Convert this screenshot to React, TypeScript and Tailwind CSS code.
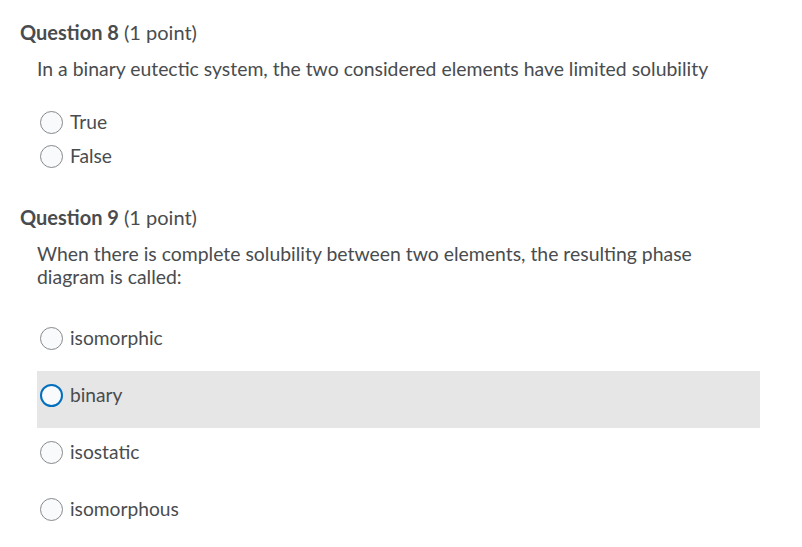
import React from "react";

const Radio = ({ focused = false }: { focused?: boolean }) => (
  <span
    className={
      focused
        ? "inline-block w-[23px] h-[23px] rounded-full border-2 border-[#006fbf] bg-[#f9fafb] shrink-0"
        : "inline-block w-[23px] h-[23px] rounded-full border border-[#868a8e] bg-[#f9fafb] shrink-0"
    }
  />
);

const q9Options = ["isomorphic", "binary", "isostatic", "isomorphous"];

export default function App() {
  return (
    <div className="w-[802px] h-[547px] bg-white text-[#494c4e] font-['Lato','Noto_Sans',sans-serif] pl-[20px] pt-[20px]">
      {/* Question 8 */}
      <h2 className="text-[20px] leading-[24px]">
        <span className="font-bold">Question 8</span> (1 point)
      </h2>
      <p className="mt-[13px] ml-[17px] text-[19.4px] leading-[24px]">
        In a binary eutectic system, the two considered elements have limited solubility
      </p>
      <div className="mt-[30px] ml-[20px] flex flex-col gap-[11px]">
        {["True", "False"].map((o) => (
          <label key={o} className="flex items-center gap-[7px] h-[23px] text-[19.2px]">
            <Radio />
            {o}
          </label>
        ))}
      </div>

      {/* Question 9 */}
      <h2 className="mt-[37px] text-[20px] leading-[24px]">
        <span className="font-bold">Question 9</span> (1 point)
      </h2>
      <p className="mt-[13px] ml-[17px] w-[670px] text-[19.4px] leading-[23px]">
        When there is complete solubility between two elements, the resulting phase diagram is called:
      </p>
      <div className="mt-[26px] ml-[17px] w-[723px] flex flex-col">
        {q9Options.map((o) => (
          <label
            key={o}
            className={
              "flex items-start h-[57px] pt-[13px] pl-[3px] text-[19.2px] " +
              (o === "binary" ? "bg-[#e6e6e6]" : "")
            }
          >
            <span className="flex items-center gap-[7px] h-[23px]">
              <Radio focused={o === "binary"} />
              {o}
            </span>
          </label>
        ))}
      </div>
    </div>
  );
}
